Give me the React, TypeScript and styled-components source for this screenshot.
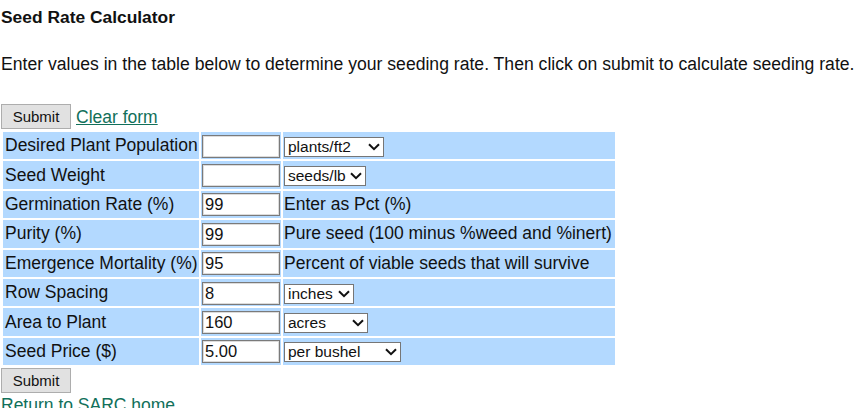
import { createGlobalStyle } from "styled-components";
import styled from "styled-components";

const GlobalStyle = createGlobalStyle`
  body {
    margin: 0;
    background: #ffffff;
    color: #000000;
    font-family: "Liberation Sans", Arial, sans-serif;
  }
`;

type Row = {
  label: string;
  value: string;
  note?: string;
  options?: string[];
  selectWidth?: number;
};

const rows: Row[] = [
  { label: "Desired Plant Population", value: "", options: ["plants/ft2", "plants/acre"], selectWidth: 100 },
  { label: "Seed Weight", value: "", options: ["seeds/lb", "g/1000 seeds"], selectWidth: 82 },
  { label: "Germination Rate (%)", value: "99", note: "Enter as Pct (%)" },
  { label: "Purity (%)", value: "99", note: "Pure seed (100 minus %weed and %inert)" },
  { label: "Emergence Mortality (%)", value: "95", note: "Percent of viable seeds that will survive" },
  { label: "Row Spacing", value: "8", options: ["inches", "cm"], selectWidth: 70 },
  { label: "Area to Plant", value: "160", options: ["acres", "hectares"], selectWidth: 84 },
  { label: "Seed Price ($)", value: "5.00", options: ["per bushel", "per lb", "per unit"], selectWidth: 117 },
];

function Chevron() {
  return (
    <ArrowIcon width="12" height="8" viewBox="0 0 12 8" aria-hidden="true">
      <path d="M1 1.2 L6 6.2 L11 1.2" fill="none" stroke="#111" strokeWidth="2" />
    </ArrowIcon>
  );
}

export default function App() {
  return (
    <Page>
      <GlobalStyle />
      <Title>Seed Rate Calculator</Title>
      <Intro>
        Enter values in the table below to determine your seeding rate. Then click on submit to calculate seeding rate.
      </Intro>
      <form onSubmit={(e) => e.preventDefault()}>
        <Toolbar>
          <SubmitButton type="submit">Submit</SubmitButton>
          <GreenLink href="#">Clear form</GreenLink>
        </Toolbar>
        <Table>
          <colgroup>
            <col style={{ width: 196 }} />
            <col style={{ width: 80 }} />
            <col style={{ width: 332 }} />
          </colgroup>
          <tbody>
            {rows.map((row) => (
              <tr key={row.label}>
                <LabelCell>{row.label}</LabelCell>
                <InputCell>
                  <ValueInput type="text" defaultValue={row.value} />
                </InputCell>
                <NoteCell>
                  {row.options ? (
                    <SelectWrap $width={row.selectWidth ?? 80}>
                      <UnitSelect defaultValue={row.options[0]}>
                        {row.options.map((o) => (
                          <option key={o}>{o}</option>
                        ))}
                      </UnitSelect>
                      <Chevron />
                    </SelectWrap>
                  ) : (
                    row.note
                  )}
                </NoteCell>
              </tr>
            ))}
          </tbody>
        </Table>
        <BottomBar>
          <SubmitButton type="submit">Submit</SubmitButton>
        </BottomBar>
      </form>
      <GreenLink href="#">Return to SARC home</GreenLink>
    </Page>
  );
}

const Page = styled.div`
  padding: 0 1px;
`;

const Title = styled.h1`
  margin: 0;
  padding-top: 8px;
  font-size: 17.4px;
  font-weight: bold;
  line-height: 19px;
  color: #111111;
`;

const Intro = styled.p`
  margin: 27px 0 0;
  font-size: 17.6px;
  line-height: 20px;
  color: #111111;
  white-space: nowrap;
`;

const Toolbar = styled.div`
  display: flex;
  align-items: center;
  gap: 5px;
  margin-top: 30px;
`;

const SubmitButton = styled.button`
  width: 70px;
  height: 25px;
  padding: 0;
  border: 1px solid #adadad;
  border-radius: 0;
  background: #e1e1e1;
  color: #111111;
  font-family: "Liberation Sans", Arial, sans-serif;
  font-size: 15px;
`;

const GreenLink = styled.a`
  color: #11705a;
  font-size: 17.5px;
  line-height: 20px;
  text-decoration: underline;
`;

const Table = styled.table`
  margin-top: 1px;
  table-layout: fixed;
  width: 616px;
  border-collapse: separate;
  border-spacing: 2px;
  font-size: 17.5px;
  color: #111111;
`;

const Cell = styled.td`
  height: 27.4px;
  padding: 0 1px;
  background: #b3d9ff;
  vertical-align: middle;
  white-space: nowrap;
  overflow: hidden;
`;

const LabelCell = styled(Cell)`
  padding-left: 2px;
  padding-right: 0;
`;

const InputCell = styled(Cell)``;

const NoteCell = styled(Cell)``;

const ValueInput = styled.input`
  box-sizing: border-box;
  display: block;
  width: 78px;
  height: 23px;
  margin: 1px 0 0;
  padding: 0 2px;
  border: 1px solid #7a7a7a;
  box-shadow: inset 0 0 0 1px #dcdcdc;
  border-radius: 0;
  background: #ffffff;
  font-family: "Liberation Sans", Arial, sans-serif;
  font-size: 16.5px;
  color: #111111;
`;

const SelectWrap = styled.div<{ $width: number }>`
  position: relative;
  width: ${({ $width }) => $width}px;
  height: 20px;
  margin-top: 2px;
`;

const UnitSelect = styled.select`
  box-sizing: border-box;
  display: block;
  width: 100%;
  height: 20px;
  padding: 0 0 0 3px;
  border: 1px solid #767676;
  border-radius: 0;
  appearance: none;
  background: #ffffff;
  font-family: "Liberation Sans", Arial, sans-serif;
  font-size: 15.5px;
  line-height: 18px;
  color: #111111;
`;

const ArrowIcon = styled.svg`
  position: absolute;
  right: 4px;
  top: 6px;
  pointer-events: none;
`;

const BottomBar = styled.div`
  margin-top: 1px;
  height: 27px;
`;
